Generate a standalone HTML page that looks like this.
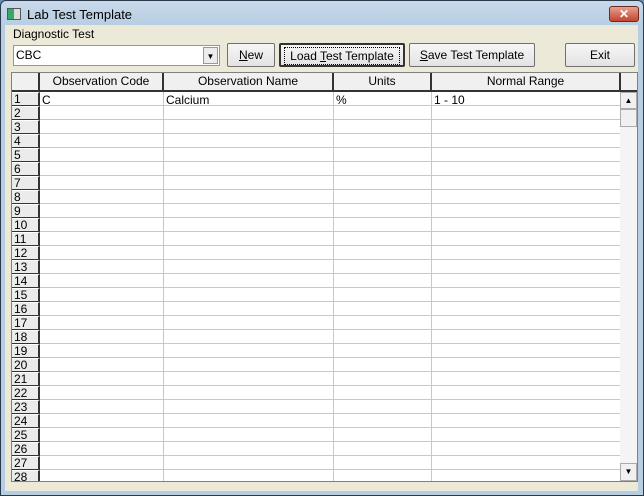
<!DOCTYPE html>
<html><head><style>
*{margin:0;padding:0;box-sizing:border-box}
body{width:644px;height:496px;overflow:hidden;background:#6f8fb0;font-family:"Liberation Sans",sans-serif;font-size:12px;position:relative}
.win{position:absolute;left:0;top:0;width:644px;height:496px;border:1px solid #2a3a4a;border-radius:6px 6px 0 0;background:linear-gradient(#c9d9ea,#b7cde2 25px);}
.title{position:absolute;left:26px;top:6px;font-size:13px;color:#000}
.ico{position:absolute;left:6px;top:7px;width:14px;height:12px;border:1px solid #555;background:linear-gradient(90deg,#3a6 0,#3a6 50%,#ddd 50%)}
.close{position:absolute;left:608px;top:5px;width:30px;height:16px;border:1px solid #6b2a1e;border-radius:3px;background:linear-gradient(#e8a090,#c4452e);color:#fff;font-size:12px;font-weight:bold;text-align:center;line-height:14px}
.client{position:absolute;left:5px;top:25px;width:633px;height:466px;background:#ece9d8}
.abs{position:absolute}
.btn{position:absolute;height:24px;background:linear-gradient(#f6f6f6,#e3e3e3);border:1px solid #707070;border-radius:2px;text-align:center;line-height:22px;font-size:12px}
.grid{position:absolute;left:11px;top:72px;width:627px;height:410px;border:1px solid #808080;background:#fff;overflow:hidden}
.hd{position:absolute;top:0;height:19px;background:#f0f0f0;border-right:2px solid #333;border-bottom:2px solid #333;text-align:center;line-height:17px}
.rh{position:absolute;left:0;width:28px;height:14px;background:#ebebeb;border-top:1px solid #fff;border-right:2px solid #333;border-bottom:1px solid #333;font-size:12px;line-height:12px;padding-left:2px}
.hl{position:absolute;left:28px;width:580px;height:1px;background:#c8c8c8}
.vl{position:absolute;top:19px;width:1px;height:400px;background:#c8c8c8}
.sb{position:absolute;left:608px;top:19px;width:17px;height:390px;background:#f4f4f4}
</style></head><body>
<div class="win">
<div class="ico"></div><div class="title">Lab Test Template</div>
<div class="close">✕</div>
</div>
<div class="client"></div>
<div class="abs" style="left:13px;top:27px">Diagnostic Test</div>
<div class="abs" style="left:13px;top:45px;width:207px;height:21px;border:1px solid #7f9db9;background:#fff;padding:2px 2px;line-height:15px">CBC</div>
<div class="abs" style="left:203px;top:47px;width:15px;height:17px;background:#ececec;border:1px solid #999;font-size:8px;text-align:center;line-height:17px">▼</div>
<div class="btn" style="left:227px;top:43px;width:48px"><u>N</u>ew</div>
<div class="btn" style="left:279px;top:43px;width:126px;border:2px solid #333"><span style="outline:1px dotted #000;outline-offset:1px;padding:0 4px">Load <u>T</u>est Template</span></div>
<div class="btn" style="left:409px;top:43px;width:126px"><u>S</u>ave Test Template</div>
<div class="btn" style="left:565px;top:43px;width:70px">Exit</div>
<div class="grid">
<div class="hd" style="left:0;width:28px"></div>
<div class="hd" style="left:28px;width:124px">Observation Code</div>
<div class="hd" style="left:152px;width:170px">Observation Name</div>
<div class="hd" style="left:322px;width:98px">Units</div>
<div class="hd" style="left:420px;width:189px">Normal Range</div>
<div class="hd" style="left:609px;width:18px;border-right:none"></div>
<div class="vl" style="left:151px"></div><div class="vl" style="left:321px"></div><div class="vl" style="left:419px"></div>
<div class="abs" style="left:30px;top:20px">C</div>
<div class="abs" style="left:154px;top:20px">Calcium</div>
<div class="abs" style="left:324px;top:20px">%</div>
<div class="abs" style="left:422px;top:20px">1 - 10</div>
<div class="sb"></div>
<div class="abs" style="left:608px;top:19px;width:17px;height:17px;background:#f0f0f0;border:1px solid #aaa;font-size:8px;text-align:center;line-height:15px">▲</div>
<div class="abs" style="left:608px;top:36px;width:17px;height:18px;background:#f0f0f0;border:1px solid #aaa"></div>
<div class="abs" style="left:608px;top:390px;width:17px;height:18px;background:#f0f0f0;border:1px solid #aaa;font-size:8px;text-align:center;line-height:16px">▼</div>
<div id="rows"></div>
</div>
<script>
var h='';for(var i=1;i<=28;i++){var t=19+(i-1)*14;h+='<div class="rh" style="top:'+t+'px">'+i+'</div><div class="hl" style="top:'+(t+13)+'px"></div>';}
document.getElementById('rows').innerHTML=h;
</script>
</body></html>
